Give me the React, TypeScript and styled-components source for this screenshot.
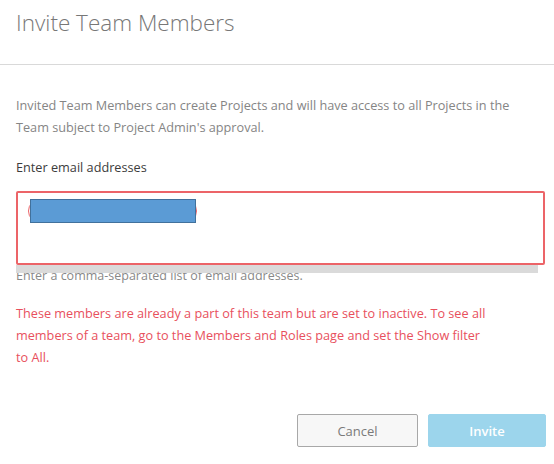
import styled, { createGlobalStyle } from "styled-components";

const GlobalStyle = createGlobalStyle`
  html, body {
    margin: 0;
    padding: 0;
    background: #fff;
  }
  body {
    font-family: "Open Sans", "Noto Sans", sans-serif;
  }
`;

export default function App() {
  return (
    <Dialog>
      <GlobalStyle />
      <Header>
        <Title>Invite Team Members</Title>
      </Header>

      <Body>
        <Intro>
          Invited Team Members can create Projects and will have access to all
          Projects in the Team subject to Project Admin's approval.
        </Intro>

        <Label>Enter email addresses</Label>
        <EmailBox>
          <Chip>
            <Redacted />
          </Chip>
        </EmailBox>
        <HelperWrap>
          <ScrollTrack />
          <Helper>Enter a comma-separated list of email addresses.</Helper>
        </HelperWrap>

        <ErrorText>
          These members are already a part of this team but are set to
          inactive. To see all members of a team, go to the Members and Roles
          page and set the Show filter
          <br />
          to All.
        </ErrorText>
      </Body>

      <Footer>
        <Button>Cancel</Button>
        <Button primary disabled>
          Invite
        </Button>
      </Footer>
    </Dialog>
  );
}

const Dialog = styled.div`
  width: 554px;
  height: 464px;
  display: flex;
  flex-direction: column;
  background: #fff;
`;

const Header = styled.div`
  height: 65px;
  padding: 7px 16px 0;
  box-sizing: border-box;
  border-bottom: 1px solid #d9d9d9;
`;

const Title = styled.h1`
  margin: 0;
  font-size: 22.5px;
  font-weight: 300;
  color: #777;
  line-height: 32px;
`;

const Body = styled.div`
  padding: 29px 9px 0 16px;
  flex: 1;
`;

const Intro = styled.p`
  margin: 0;
  max-width: 500px;
  font-size: 12.7px;
  line-height: 22px;
  color: #858585;
`;

const Label = styled.div`
  margin-top: 20px;
  font-size: 12.7px;
  line-height: 18px;
  color: #3c3c3c;
`;

const EmailBox = styled.div`
  margin-top: 15px;
  height: 74px;
  border: 2px solid #ec6468;
  border-radius: 2px;
  box-sizing: border-box;
  padding: 6px 10px;
`;

const Chip = styled.div`
  position: relative;
  width: 169px;
  height: 24px;
  border: 1px solid #ec6468;
  border-radius: 12px;
  box-sizing: border-box;
`;

const Redacted = styled.div`
  position: absolute;
  left: 1px;
  top: -1px;
  width: 166px;
  height: 24px;
  background: #5b9bd5;
  border: 1px solid #41719c;
  box-sizing: border-box;
`;

const HelperWrap = styled.div`
  position: relative;
  height: 18px;
  overflow: hidden;
`;

const ScrollTrack = styled.div`
  position: absolute;
  left: 0;
  top: 0;
  width: 522px;
  height: 8px;
  background: #dadada;
  z-index: 1;
`;

const Helper = styled.div`
  padding-top: 3px;
  font-size: 12.5px;
  line-height: 16px;
  color: #888;
`;

const ErrorText = styled.p`
  margin: 19px 0 0;
  max-width: 500px;
  font-size: 12.7px;
  line-height: 22px;
  color: #e8505d;
`;

const Footer = styled.div`
  display: flex;
  justify-content: flex-end;
  gap: 10px;
  padding: 0 8px 17px 0;
`;

const Button = styled.button<{ primary?: boolean }>`
  width: ${(p) => (p.primary ? "118px" : "121px")};
  height: 33px;
  border-radius: 2px;
  font-family: inherit;
  font-size: 13px;
  cursor: pointer;
  border: 1px solid ${(p) => (p.primary ? "#9cd5ec" : "#a8a8a8")};
  background: ${(p) => (p.primary ? "#9cd5ec" : "#f7f7f7")};
  color: ${(p) => (p.primary ? "#fff" : "#7a7a7a")};
  font-weight: ${(p) => (p.primary ? 600 : 400)};
`;
